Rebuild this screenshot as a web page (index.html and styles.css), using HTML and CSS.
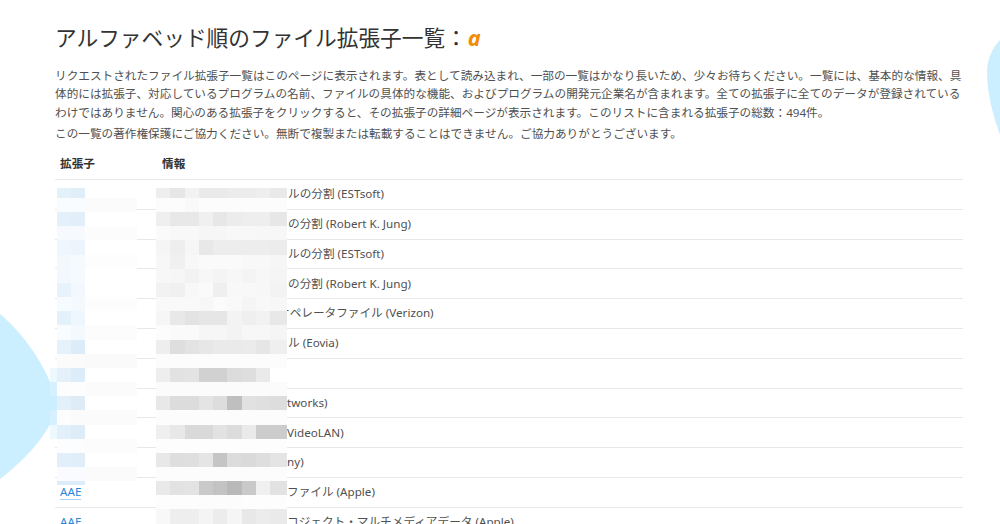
FILE: index.html
```html
<!DOCTYPE html>
<html lang="ja">
<head>
<meta charset="utf-8">
<title>アルファベッド順のファイル拡張子一覧</title>
<link rel="stylesheet" href="styles.css">
</head>
<body>
<svg class="blob blob-right" viewBox="0 0 13 95" width="13" height="95" aria-hidden="true"><path d="M13 0C5 8 0 20 0 32C0 55 7 78 13 95Z"/></svg>
<svg class="blob blob-left" viewBox="0 0 58 165" width="58" height="165" aria-hidden="true"><path d="M0 0C24 20 44 50 54 78C57 88 57 94 54 102C44 126 22 148 0 165Z"/></svg>
<main class="page">
  <h1 class="title">アルファベッド順のファイル拡張子一覧：<em class="letter">a</em></h1>
  <p class="intro">リクエストされたファイル拡張子一覧はこのページに表示されます。表として読み込まれ、一部の一覧はかなり長いため、少々お待ちください。一覧には、基本的な情報、具体的には拡張子、対応しているプログラムの名前、ファイルの具体的な機能、およびプログラムの開発元企業名が含まれます。全ての拡張子に全てのデータが登録されているわけではありません。関心のある拡張子をクリックすると、その拡張子の詳細ページが表示されます。このリストに含まれる拡張子の総数：494件。</p>
  <p class="notice">この一覧の著作権保護にご協力ください。無断で複製または転載することはできません。ご協力ありがとうございます。</p>
  <div class="list">
    <div class="row head"><span class="ext">拡張子</span><span class="info">情報</span></div>
    <div class="row"><span class="ext"></span><span class="info"><span class="gap"></span>ルの分割 (ESTsoft)</span></div>
    <div class="row"><span class="ext"></span><span class="info"><span class="gap"></span>の分割 (Robert K. Jung)</span></div>
    <div class="row"><span class="ext"></span><span class="info"><span class="gap"></span>ルの分割 (ESTsoft)</span></div>
    <div class="row"><span class="ext"></span><span class="info"><span class="gap"></span>の分割 (Robert K. Jung)</span></div>
    <div class="row"><span class="ext"></span><span class="info"><span class="gap gap-short"></span>オペレータファイル (Verizon)</span></div>
    <div class="row"><span class="ext"></span><span class="info"><span class="gap"></span>ル (Eovia)</span></div>
    <div class="row"><span class="ext"></span><span class="info"></span></div>
    <div class="row"><span class="ext"></span><span class="info"><span class="gap gap-tight"></span>tworks)</span></div>
    <div class="row"><span class="ext"></span><span class="info"><span class="gap gap-tight"></span>VideoLAN)</span></div>
    <div class="row"><span class="ext"></span><span class="info"><span class="gap gap-tight"></span>ny)</span></div>
    <div class="row"><span class="ext"><a class="link" href="#">AAE</a></span><span class="info"><span class="gap gap-tight"></span>ファイル (Apple)</span></div>
    <div class="row"><span class="ext"><a class="link" href="#">AAE</a></span><span class="info"><span class="gap gap-tight"></span>コジェクト・マルチメディアデータ (Apple)</span></div>
  </div>
</main>
<div class="mosaic mosaic-ext" id="mosaic-ext"></div>
<div class="mosaic mosaic-info" id="mosaic-info"></div>
<div class="mosaic mosaic-edge" id="mosaic-edge"></div>
<script src="mosaic.js"></script>
</body>
</html>
```

FILE: styles.css
```css
* { box-sizing: border-box; }
html, body { margin: 0; height: 524px; overflow: hidden; background: #fff; }
body {
  position: relative;
  font-family: "Noto Sans", "Noto Sans CJK JP", sans-serif;
  font-size: 11.65px;
  line-height: 18.5px;
  color: #505050;
}
.page { position: relative; width: 910px; margin-left: 55px; padding-top: 24px; }
.title {
  margin: 0 0 14.5px;
  font-size: 21.7px;
  line-height: 28px;
  font-weight: 400;
  color: #333;
}
.letter { color: #f28c00; font-weight: 700; font-style: italic; margin-left: 1px; }
.intro { margin: 0 0 3px; }
.notice { margin: 0 0 5.5px; }
.list { display: flex; flex-direction: column; width: 908px; }
.row {
  display: grid;
  grid-template-columns: 101px 1fr;
  align-items: center;
  height: 29.8px;
  border-bottom: 1px solid #e8e8e8;
  white-space: nowrap;
}
.head { font-weight: 700; color: #333; height: 31px; }
.ext { padding-left: 5px; }
.info { padding-left: 6px; }
.gap { display: inline-block; width: 126px; }
.gap-short { width: 116px; }
.gap-tight { width: 125px; }
.link { color: #2b88d8; text-decoration: none; border-bottom: 1px solid #a9d3f2; }
.blob { position: absolute; fill: #ccefff; }
.blob-right { top: 40px; right: 0; }
.blob-left { top: 314px; left: 0; }
.mosaic { position: absolute; display: grid; }
.mosaic-ext {
  left: 57px;
  top: 188px;
  grid-template-columns: 14px 14px 52px;
  grid-template-rows: 10px repeat(20, 14.17px) 4px;
}
.mosaic-info {
  left: 156px;
  top: 188px;
  grid-template-columns: repeat(8, 14.25px) 17px;
  grid-template-rows: 10px repeat(23, 14.17px);
}
.mosaic-edge {
  left: 50px;
  top: 368px;
  grid-template-columns: 7px;
  grid-template-rows: repeat(5, 14.17px);
}
```

FILE: mosaic.js
```js
var EXT = [
  "e3f1fa dfeef9 ffffff", "f9fcfe f9fcfe fbfbfb", "e4f0fa e2effa ffffff", "f6fafe f6fafe fcfcfc",
  "eff6fd ecf5fd ffffff", "f3f8fd f6fafe fdfdfd", "f2f8fe f5fafe ffffff", "e7f2fc f2f8fe ffffff",
  "f6fbff f4f9fe fdfdfd", "e3f1fb eef7fe ffffff", "f9fcfe f4f9fe fcfcfc", "e5f1fb dcecf9 ffffff",
  "fbfbfb fbfbfb fafafa", "e4f0fa dcecf8 ffffff", "fdfdfd fdfdfd fbfbfb", "e3eff9 deecf7 ffffff",
  "fdfdfd fbfbfb fbfbfb", "e3eff9 deecf7 ffffff", "fbfdfe fdfdfd fcfcfc", "e2eef9 e0eef9 ffffff",
  "f9fbfe f9fbfe fbfbfb", "dcedf9 dcedf9 ffffff"
];
var INFO = [
  "eeeeee e6e6e6 f2f2f2 eaeaea eaeaea ececec ececec eeeeee e9e9e9",
  "fcfcfc fcfcfc f9f9f9 fcfcfc fcfcfc fcfcfc fcfcfc fcfcfc fcfcfc",
  "efefef e8e8e8 e8e8e8 f0f0f0 e7e7e7 ececec eeeeee eeeeee e7e7e7",
  "fafafa f8f8f8 f8f8f8 f6f6f6 f6f6f6 f8f8f8 f8f8f8 f7f7f7 f7f7f7",
  "f5f5f5 eeeeee f6f6f6 e8e8e8 ededed ededed ededed ededed ececec",
  "f7f7f7 f0f0f0 f8f8f8 fafafa fafafa fafafa f8f8f8 f8f8f8 f6f6f6",
  "f7f7f7 f6f6f6 f2f2f2 f7f7f7 f4f4f4 f7f7f7 f4f4f4 f7f7f7 f5f5f5",
  "f2f2f2 f0f0f0 f8f8f8 fafafa efefef f8f8f8 f8f8f8 f7f7f7 f3f3f3",
  "f9f9f9 f9f9f9 f9f9f9 f7f7f7 fbfbfb f9f9f9 f5f5f5 f8f8f8 f7f7f7",
  "f6f6f6 e8e8e8 e3e3e3 e6e6e6 e6e6e6 f3f3f3 efefef f2f2f2 e8e8e8",
  "fcfcfc fafafa fafafa f6f6f6 f6f6f6 f3f3f3 f7f7f7 f7f7f7 f5f5f5",
  "eeeeee dedede e3e3e3 e7e7e7 eaeaea eaeaea ebebeb e6e6e6 efefef",
  "fcfcfc fcfcfc fcfcfc fcfcfc fcfcfc fcfcfc fcfcfc fcfcfc fcfcfc",
  "eeeeee e2e2e2 e3e3e3 d1d1d1 d1d1d1 dcdcdc dedede eaeaea ffffff",
  "fbfbfb fbfbfb fbfbfb fbfbfb fbfbfb fbfbfb fbfbfb fbfbfb fbfbfb",
  "e8e8e8 dcdcdc dcdcdc e4e4e4 dddddd bfbfbf e1e1e1 dfdfdf dddddd",
  "fcfcfc fcfcfc fcfcfc fcfcfc fcfcfc fcfcfc fcfcfc fcfcfc fcfcfc",
  "efefef e8e8e8 d9d9d9 d9d9d9 e2e2e2 dcdcdc eaeaea cccccc cccccc",
  "fdfdfd fdfdfd fdfdfd fdfdfd fdfdfd fdfdfd fdfdfd fdfdfd fdfdfd",
  "e8e8e8 dedede dfdfdf e5e5e5 c5c5c5 dcdcdc dadada dedede e4e4e4",
  "fcfcfc fcfcfc fcfcfc fcfcfc fcfcfc fcfcfc fcfcfc fcfcfc fcfcfc",
  "e9e9e9 e2e2e2 e3e3e3 c9c9c9 c3c3c3 b9b9b9 c9c9c9 f0f0f0 e2e2e2",
  "fdfdfd fdfdfd fdfdfd fcfcfc fcfcfc fcfcfc fdfdfd fdfdfd fdfdfd",
  "f8f8f8 eeeeee eeeeee f4f4f4 ececec f5f5f5 e8e8e8 ececec eaeaea"
];
var EDGE = ["eef8ff", "d6f0ff", "ccefff", "d6f0ff", "eef8ff"];

function paint(id, rows) {
  var host = document.getElementById(id);
  rows.forEach(function (row) {
    row.split(" ").forEach(function (hex) {
      var cell = document.createElement("span");
      cell.style.background = "#" + hex;
      host.appendChild(cell);
    });
  });
}

paint("mosaic-ext", EXT);
paint("mosaic-info", INFO);
paint("mosaic-edge", EDGE);
```
